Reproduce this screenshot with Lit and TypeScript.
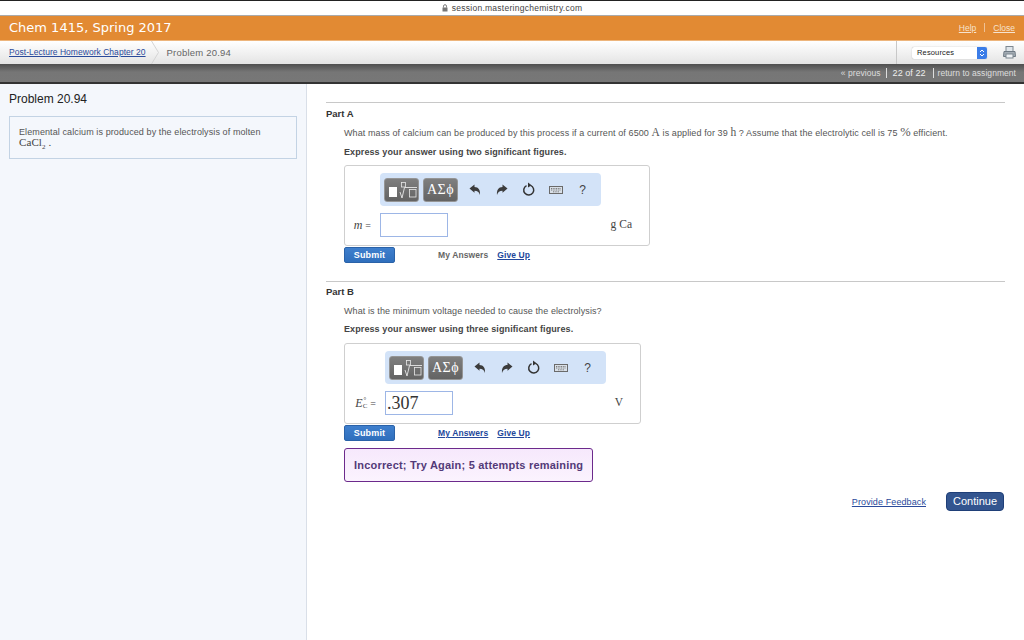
import { LitElement, html, css, svg } from "lit";
import { customElement, property } from "lit/decorators.js";

const undoIcon = svg`<path d="M0.5 4.5 L5.5 0.5 L5.5 3 C9.5 3 11.5 6 11 11 C10 8 8.5 6.8 5.5 6.8 L5.5 8.8 Z" fill="#3c3c3c"/>`;
const redoIcon = svg`<path d="M11.5 4.5 L6.5 0.5 L6.5 3 C2.5 3 0.5 6 1 11 C2 8 3.5 6.8 6.5 6.8 L6.5 8.8 Z" fill="#3c3c3c"/>`;

@customElement("math-box")
class MathBox extends LitElement {
  @property({ type: String }) unit = "";
  @property({ type: String }) value = "";
  @property({ type: Boolean }) wide = false;

  static styles = css`
    :host { display: block; }
    .box {
      width: 306px; box-sizing: border-box; height: 81px;
      border: 1px solid #cfcfcf; border-radius: 3px; background: #fff;
      padding: 7px 0 0 0; display: grid; grid-template-columns: 35px 221px 1fr; grid-template-rows: 33px 24px; row-gap: 7px;
    }
    .box.wide { width: 297px; grid-template-columns: 40px 221px 1fr; }
    .tools {
      grid-column: 2; grid-row: 1; background: #d3e3f8; border-radius: 4px; display: flex; align-items: center; padding-left: 4px;
    }
    .btn {
      width: 35px; height: 24px; box-sizing: border-box; margin-right: 4px; border-radius: 3px;
      background: linear-gradient(#7f7f7f, #636363); border: 1px solid #959595; color: #fff;
      display: flex; align-items: center; justify-content: center;
      font: 14px "Liberation Serif", serif; letter-spacing: 0.5px; white-space: nowrap;
    }
    .btn.last { margin-right: 3px; }
    .btn svg { display: block; }
    .cell { width: 27px; height: 24px; display: flex; align-items: center; justify-content: center; color: #444; font: 12px "Liberation Sans", sans-serif; }
    .label {
      grid-column: 1; grid-row: 2; display: flex; align-items: center; justify-content: flex-end; padding-right: 9px;
      font: 10px "Liberation Serif", serif; color: #444; gap: 3px; white-space: nowrap;
    }
    .input {
      grid-column: 2; grid-row: 2; width: 68px; height: 24px; box-sizing: border-box; border: 1px solid #9db6e6;
      font: 18px/23px "Liberation Serif", serif; color: #333; padding-left: 1px;
    }
    .unit { grid-column: 3; grid-row: 2; text-align: right; padding-right: 17px; font: 11.5px/23px "Liberation Serif", serif; color: #444; }
  `;

  render() {
    return html`<div class="box ${this.wide ? "wide" : ""}">
      <div class="tools">
        <div class="btn">
          <svg width="33" height="22" viewBox="0 0 33 22" fill="none">
            <rect x="4" y="8" width="8" height="10" fill="#fff"/>
            <rect x="16.5" y="3.5" width="4" height="4.5" stroke="#e8e8e8" stroke-width="0.8"/>
            <path d="M15 13 L17 19 L19.5 8.5 H32" stroke="#e8e8e8" stroke-width="0.9"/>
            <rect x="24.5" y="10.5" width="6.5" height="7.5" stroke="#e8e8e8" stroke-width="0.8"/>
          </svg>
        </div>
        <div class="btn last">ΑΣϕ</div>
        <div class="cell"><svg width="12" height="12" viewBox="0 0 12 12">${undoIcon}</svg></div>
        <div class="cell"><svg width="12" height="12" viewBox="0 0 12 12">${redoIcon}</svg></div>
        <div class="cell">
          <svg width="14" height="15" viewBox="0 0 14 15" fill="none">
            <path d="M8.5 3.4 A5 5 0 1 1 4.5 3.6" stroke="#333" stroke-width="1.5"/>
            <path d="M6 0.5 L9.6 3.3 L6 5.6 Z" fill="#333"/>
          </svg>
        </div>
        <div class="cell">
          <svg width="14" height="8" viewBox="0 0 14 8">
            <rect x="0.5" y="0.5" width="13" height="7" fill="#d9e0e8" stroke="#6a6a6a"/>
            <path d="M2 2.5 H12 M2 4 H12 M4 5.8 H10" stroke="#7a7a7a" stroke-dasharray="1 0.7"/>
          </svg>
        </div>
        <div class="cell">?</div>
      </div>
      <div class="label"><slot></slot></div>
      <div class="input">${this.value}</div>
      <div class="unit">${this.unit}</div>
    </div>`;
  }
}

@customElement("app-root")
class AppRoot extends LitElement {
  static styles = css`
    :host { display: block; width: 1024px; height: 640px; overflow: hidden; font-family: "Liberation Sans", Arial, sans-serif; background: #fff; color: #333; }
    .url {
      height: 16px; box-sizing: border-box; border-top: 1px solid #222; border-bottom: 1px solid #aaa; background: #fff;
      display: flex; align-items: center; justify-content: center; gap: 4px;
      font-size: 8.5px; color: #444; letter-spacing: 0.26px;
    }
    .course {
      height: 25px; box-sizing: border-box; background: #e28a33; border-bottom: 1px solid #edb57c;
      display: flex; align-items: center; justify-content: space-between; padding: 0 9px 1px; color: #fff;
    }
    .name { font: 13px "DejaVu Sans", Verdana, sans-serif; }
    .links { font-size: 8.5px; display: flex; gap: 8px; align-items: center; color: #f6e3cf; }
    .links u { text-decoration: underline; }
    .sep { width: 1px; height: 9px; background: #eec195; }
    .crumbs {
      height: 23px; box-sizing: border-box; background: linear-gradient(#fff, #e4e4e4); display: flex; align-items: center; padding-left: 9px; font-size: 8.5px; color: #555;
    }
    .crumbs a { color: #2a4a9b; text-decoration: underline; letter-spacing: 0.03px; padding-bottom: 1px; }
    .chev { margin: 0 8px 0 5px; display: block; }
    .cur { font-size: 9.5px; color: #666; letter-spacing: 0.2px; padding-bottom: 1px; }
    .spacer { flex: 1; }
    .tools { align-self: stretch; border-left: 1px solid #c8c8c8; width: 128px; box-sizing: border-box; display: flex; align-items: center; padding-left: 15px; }
    .select {
      width: 75px; height: 12px; box-sizing: border-box; background: #fff; border-radius: 2px; display: flex; align-items: center; justify-content: space-between;
      font-size: 7.5px; color: #222; padding-left: 5px; letter-spacing: 0.15px; box-shadow: 0 0 1px #999;
    }
    .step { width: 10px; height: 12px; background: #3b7de8; border-radius: 0 2px 2px 0; display: block; }
    .print { margin-left: 16px; display: block; }
    .pager {
      height: 20px; box-sizing: border-box; background: linear-gradient(#4f4f4f, #767676 45%, #777); border-bottom: 2px solid #333;
      display: flex; align-items: center; justify-content: flex-end; padding-right: 8px; font-size: 8.5px; color: #ddd; letter-spacing: 0.05px;
    }
    .bar { width: 1px; height: 10px; background: #ddd; margin: 0 6px 0 5px; }
    .bar.wide { margin: 0 4px 0 7px; }
    .strong { font-size: 9px; color: #eee; }
    .body { display: flex; height: 556px; }
    .side { width: 307px; box-sizing: border-box; background: #f4f7fc; border-right: 1px solid #d9dfe8; padding: 8px 9px 0 9px; }
    .side h2 { margin: 0 0 9px; font-size: 12px; line-height: 15px; font-weight: normal; color: #222; }
    .statement {
      width: 288px; height: 43px; box-sizing: border-box; border: 1px solid #c3d3e4; padding: 10px 0 0 9px; font-size: 9px; line-height: 10px; color: #555; letter-spacing: 0.1px; white-space: nowrap;
    }
    .statement .m { font: 11px/10px "Liberation Serif", serif; color: #444; }
    .statement sub { font-size: 7px; line-height: 0; }
    .main { flex: 1; padding: 18px 19px 0 19px; min-width: 0; }
    .part { border-top: 1px solid #c8c8c8; height: 178px; }
    .part h3 { margin: 0; padding-top: 5px; font-size: 9.5px; line-height: 12px; font-weight: bold; color: #333; }
    .part.second h3 { padding-top: 4px; }
    .inner { margin-left: 18px; }
    .q { margin-top: 5px; font-size: 9px; line-height: 12px; color: #555; letter-spacing: 0.1px; white-space: nowrap; }
    .second .q { margin-top: 7px; }
    .q .m { font: 11.5px "Liberation Serif", serif; }
    .q .pct { font: 12.5px "Liberation Serif", serif; }
    .hint { margin-top: 6px; margin-bottom: 7px; font-size: 9px; line-height: 12px; font-weight: bold; color: #444; letter-spacing: 0.1px; }
    .second .hint { margin-bottom: 8px; }
    .actions { display: flex; align-items: center; height: 16px; margin-top: 1px; font-size: 8.5px; font-weight: bold; color: #666; }
    .submit {
      width: 51px; height: 16px; box-sizing: border-box; background: linear-gradient(#3f7fcd, #2f6fbd); border: 1px solid #2a62a8; border-radius: 2px; color: #fff; text-align: center; line-height: 14px; font-size: 9px; letter-spacing: 0.15px;
    }
    .a { margin-left: 43px; letter-spacing: 0.1px; }
    .b { margin-left: 9px; color: #23479b; text-decoration: underline; letter-spacing: 0.1px; }
    .lnk { color: #23479b; text-decoration: underline; }
    .alert {
      width: 249px; height: 34px; box-sizing: border-box; margin-top: 7px; border: 1px solid #6c2a8c; border-radius: 3px;
      background: linear-gradient(#f6e8fc, #fbf3fe); color: #533a78; font-size: 11px; font-weight: bold; line-height: 32px; padding-left: 9px; letter-spacing: 0.2px; white-space: nowrap;
    }
    .foot { display: flex; justify-content: flex-end; align-items: center; gap: 20px; margin-top: 10px; padding-right: 1px; }
    .foot a { color: #2a4a9b; text-decoration: underline; font-size: 9px; letter-spacing: 0.1px; }
    .cont { width: 58px; height: 19px; border-radius: 4px; background: #33558f; border: 1px solid #1f3f78; box-sizing: border-box; color: #fff; text-align: center; font-size: 11px; line-height: 17px; }
    .mi { font-size: 12px; font-style: italic; }
    .mathlabel { display: inline-flex; align-items: center; }
    .ec { display: inline-flex; flex-direction: column; align-items: center; font-size: 7px; line-height: 6px; }
  `;

  render() {
    return html`
      <div class="url">
        <svg width="6" height="8" viewBox="0 0 6 8"><path d="M1.5 3.5 V2.2 A1.5 1.5 0 0 1 4.5 2.2 V3.5" fill="none" stroke="#777"/><rect x="0.5" y="3.5" width="5" height="4" fill="#777"/></svg>
        <span>session.masteringchemistry.com</span>
      </div>
      <div class="course">
        <span class="name">Chem 1415, Spring 2017</span>
        <span class="links"><u>Help</u><span class="sep"></span><u>Close</u></span>
      </div>
      <div class="crumbs">
        <a>Post-Lecture Homework Chapter 20</a>
        <svg class="chev" width="8" height="23" viewBox="0 0 8 23"><path d="M0.5 0 L7.5 11.5 L0.5 23" fill="none" stroke="#d4d4d4"/></svg>
        <span class="cur">Problem 20.94</span>
        <span class="spacer"></span>
        <div class="tools">
          <div class="select">Resources
            <svg class="step" width="10" height="12" viewBox="0 0 10 12"><path d="M3 5 L5 3 L7 5 M3 7 L5 9 L7 7" fill="none" stroke="#fff"/></svg>
          </div>
          <svg class="print" width="13" height="13" viewBox="0 0 13 13">
            <rect x="3" y="0.5" width="7" height="5" fill="#dfe5ea" stroke="#7d8790"/>
            <path d="M1 5.5 H12 L12.5 10.5 H0.5 Z" fill="#a4adb5" stroke="#6f7a84"/>
            <rect x="3" y="8" width="7" height="4" fill="#eef1f4" stroke="#7d8790"/>
          </svg>
        </div>
      </div>
      <div class="pager">
        <span>« previous</span><span class="bar"></span><span class="strong">22 of 22</span><span class="bar wide"></span><span>return to assignment</span>
      </div>
      <div class="body">
        <aside class="side">
          <h2>Problem 20.94</h2>
          <div class="statement">Elemental calcium is produced by the electrolysis of molten<br><span class="m">CaCl<sub>2</sub> .</span></div>
        </aside>
        <main class="main">
          <section class="part">
            <h3>Part A</h3>
            <div class="inner">
              <div class="q">What mass of calcium can be produced by this process if a current of 6500 <span class="m">A</span> is applied for 39 <span class="m">h</span> ? Assume that the electrolytic cell is 75 <span class="pct">%</span> efficient.</div>
              <div class="hint">Express your answer using two significant figures.</div>
              <math-box unit="g Ca"><span class="mi">m</span> =</math-box>
              <div class="actions"><span class="submit">Submit</span><span class="a">My Answers</span><span class="b">Give Up</span></div>
            </div>
          </section>
          <section class="part second">
            <h3>Part B</h3>
            <div class="inner">
              <div class="q">What is the minimum voltage needed to cause the electrolysis?</div>
              <div class="hint">Express your answer using three significant figures.</div>
              <math-box wide unit="V" value=".307"><span class="mathlabel"><span class="mi">E</span><span class="ec"><span>°</span><span>C</span></span></span> =</math-box>
              <div class="actions"><span class="submit">Submit</span><span class="a lnk">My Answers</span><span class="b">Give Up</span></div>
              <div class="alert">Incorrect; Try Again; 5 attempts remaining</div>
            </div>
            <div class="foot"><a>Provide Feedback</a><span class="cont">Continue</span></div>
          </section>
        </main>
      </div>
    `;
  }
}
